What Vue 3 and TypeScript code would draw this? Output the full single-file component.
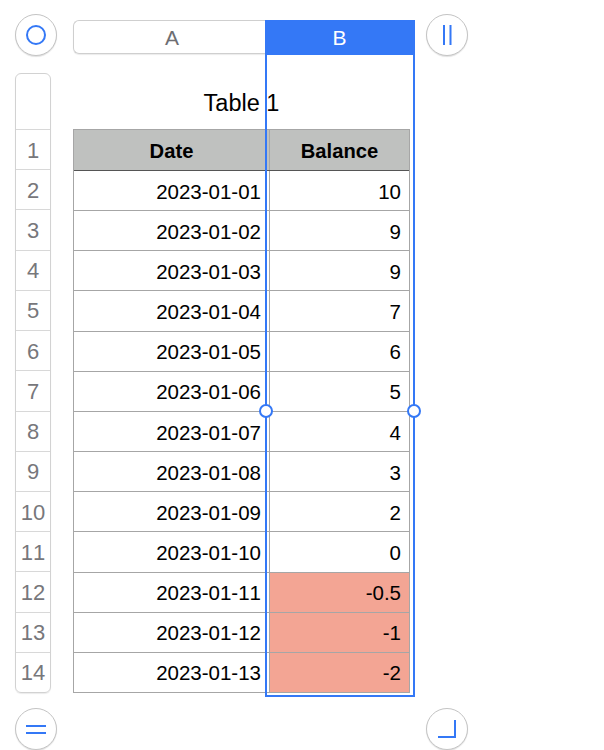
<template>
  <div class="sheet">
    <!-- top bar -->
    <div class="top">
      <button class="round">
        <span class="ring"></span>
      </button>
      <div class="cols">
        <div class="col-a">A</div>
        <div class="col-b">B</div>
      </div>
      <button class="round">
        <svg width="12" height="20" viewBox="0 0 12 20"><path d="M3 0V20M9.5 0V20" stroke="#3478f6" stroke-width="2" fill="none" /></svg>
      </button>
    </div>

    <div class="middle">
      <div class="row-nums">
        <div class="corner"></div>
        <div v-for="n in 14" :key="n" class="num">{{ n }}</div>
      </div>
      <div class="table-wrap">
        <div class="title">Table 1</div>
        <div class="table">
          <div class="tr head">
            <div class="td">Date</div>
            <div class="td">Balance</div>
          </div>
          <div v-for="r in rows" :key="r.date" class="tr">
            <div class="td">{{ r.date }}</div>
            <div class="td" :class="{ neg: r.balance < 0 }">{{ r.balance }}</div>
          </div>
        </div>
      </div>
    </div>

    <div class="bottom">
      <button class="round">
        <svg width="20" height="9" viewBox="0 0 20 9"><path d="M0 1H20M0 8H20" stroke="#3478f6" stroke-width="2" fill="none" /></svg>
      </button>
      <button class="round">
        <svg width="18" height="18" viewBox="0 0 18 18"><path d="M0 17H17V0" stroke="#3478f6" stroke-width="2" fill="none" /></svg>
      </button>
    </div>

    <!-- column selection -->
    <div class="selection">
      <span class="handle left"></span>
      <span class="handle right"></span>
    </div>
  </div>
</template>

<script setup lang="ts">
interface Row {
  date: string;
  balance: number;
}

const rows: Row[] = [
  { date: '2023-01-01', balance: 10 },
  { date: '2023-01-02', balance: 9 },
  { date: '2023-01-03', balance: 9 },
  { date: '2023-01-04', balance: 7 },
  { date: '2023-01-05', balance: 6 },
  { date: '2023-01-06', balance: 5 },
  { date: '2023-01-07', balance: 4 },
  { date: '2023-01-08', balance: 3 },
  { date: '2023-01-09', balance: 2 },
  { date: '2023-01-10', balance: 0 },
  { date: '2023-01-11', balance: -0.5 },
  { date: '2023-01-12', balance: -1 },
  { date: '2023-01-13', balance: -2 },
];
</script>

<style>
html, body { background: #fff; }
</style>

<style scoped>
.sheet {
  position: relative;
  width: 604px;
  height: 750px;
  overflow: hidden;
  font-family: "Liberation Sans", Arial, sans-serif;
  font-kerning: none;
  color: #000;
  background: #fff;
}
.top {
  display: flex;
  align-items: flex-start;
  padding: 14px 0 0 15px;
  height: 73px;
  box-sizing: border-box;
}
.round {
  width: 42px;
  height: 42px;
  padding: 0;
  box-sizing: border-box;
  border: 1px solid #c4c4c4;
  border-radius: 50%;
  background: #fff;
  box-shadow: 0 1px 1px rgba(0,0,0,0.12);
  display: flex;
  align-items: center;
  justify-content: center;
  flex-shrink: 0;
}
.ring {
  width: 20px;
  height: 20px;
  box-sizing: border-box;
  border: 2px solid #3478f6;
  border-radius: 50%;
}
.cols {
  display: flex;
  margin: 6px 11px 0 16px;
}
.col-a {
  width: 193px;
  height: 34px;
  box-sizing: border-box;
  border: 1px solid #cfcfcf;
  border-right: none;
  border-radius: 6px 0 0 6px;
  box-shadow: 0 1px 1px rgba(0,0,0,0.08);
  font-size: 21px;
  color: #6e6e72;
  display: flex;
  align-items: center;
  justify-content: center;
  padding: 1px 0 0 4px;
}
.col-b {
  width: 149px;
  height: 35px;
  background: #3478f6;
  color: #fff;
  font-size: 21px;
  display: flex;
  align-items: center;
  justify-content: center;
  padding: 1px 2px 0 0;
  box-sizing: border-box;
}
.middle {
  display: flex;
}
.row-nums {
  width: 36px;
  margin-left: 15px;
  box-sizing: border-box;
  border: 1px solid #d2d2d2;
  border-radius: 6px;
  box-shadow: 0 1px 1px rgba(0,0,0,0.08);
  height: 620px;
  display: flex;
  flex-direction: column;
  flex-shrink: 0;
}
.corner {
  height: 55px;
  flex-shrink: 0;
}
.num {
  flex: 1;
  border-top: 1px solid #d8d8d8;
  padding-top: 2px;
  font-size: 22px;
  color: #77777b;
  display: flex;
  align-items: center;
  justify-content: center;
}
.table-wrap {
  margin-left: 22px;
  width: 337px;
}
.title {
  height: 56px;
  box-sizing: border-box;
  padding-top: 16px;
  text-align: center;
  font-size: 23.5px;
  font-kerning: normal;
  line-height: 28px;
}
.table {
  border: 1px solid #a6a6a6;
  border-top: none;
  height: 564px;
  display: flex;
  flex-direction: column;
  box-sizing: border-box;
}
.tr {
  flex: 1;
  display: grid;
  grid-template-columns: 196px 1fr;
  border-top: 1px solid #a6a6a6;
  min-height: 0;
}
.td {
  padding: 2px 8px 0 0;
  font-size: 20.5px;
  display: flex;
  align-items: center;
  justify-content: flex-end;
  border-right: 1px solid #a6a6a6;
}
.td:last-child {
  border-right: none;
}
.tr.head {
  background: #bfc1bf;
  border-bottom: 1px solid #555;
  flex: none;
  height: 42px;
  box-sizing: border-box;
}
.tr.head .td {
  justify-content: center;
  padding: 2px 0 0;
  font-size: 20.2px;
  font-weight: 700;
}
.tr.head + .tr {
  border-top: none;
}
.neg {
  background: #f3a594;
}
.bottom {
  display: flex;
  justify-content: space-between;
  width: 468px;
  padding: 15px 0 0 15px;
  box-sizing: border-box;
}
.selection {
  position: absolute;
  left: 265px;
  top: 20px;
  width: 150px;
  height: 677px;
  box-sizing: border-box;
  border: 2px solid #3478f6;
  pointer-events: none;
}
.handle {
  position: absolute;
  top: 382px;
  width: 14px;
  height: 14px;
  box-sizing: border-box;
  border: 2.5px solid #3478f6;
  border-radius: 50%;
  background: #fff;
}
.handle.left { left: -8px; }
.handle.right { right: -8px; }
</style>
